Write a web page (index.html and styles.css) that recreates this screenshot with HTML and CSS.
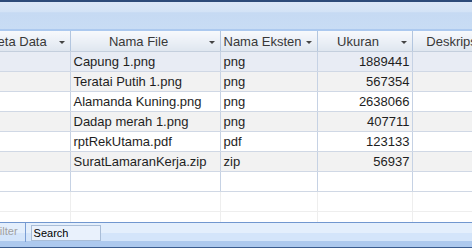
FILE: index.html
```html
<!DOCTYPE html>
<html lang="id">
<head>
    <meta charset="UTF-8">
    <title>Meta Data File</title>
    <link rel="stylesheet" href="styles.css">
</head>
<body>
    <div class="window">
        <div class="tab-strip"></div>

        <div class="grid-view">
            <table class="grid">
                <colgroup>
                    <col class="c-meta">
                    <col class="c-file">
                    <col class="c-ext">
                    <col class="c-size">
                    <col class="c-desc">
                </colgroup>
                <thead>
                    <tr>
                        <th><div class="head"><span class="label">Jenis Meta Data</span><span class="arrow"></span></div></th>
                        <th><div class="head"><span class="label">Nama File</span><span class="arrow"></span></div></th>
                        <th><div class="head"><span class="label">Nama Ekstensi</span><span class="arrow"></span></div></th>
                        <th><div class="head"><span class="label">Ukuran</span><span class="arrow"></span></div></th>
                        <th><div class="head"><span class="label">Deskripsi</span><span class="arrow"></span></div></th>
                    </tr>
                </thead>
                <tbody>
                    <tr class="current">
                        <td></td><td>Capung 1.png</td><td>png</td><td class="num">1889441</td><td></td>
                    </tr>
                    <tr class="alt">
                        <td></td><td>Teratai Putih 1.png</td><td>png</td><td class="num">567354</td><td></td>
                    </tr>
                    <tr>
                        <td></td><td>Alamanda Kuning.png</td><td>png</td><td class="num">2638066</td><td></td>
                    </tr>
                    <tr class="alt">
                        <td></td><td>Dadap merah 1.png</td><td>png</td><td class="num">407711</td><td></td>
                    </tr>
                    <tr>
                        <td></td><td>rptRekUtama.pdf</td><td>pdf</td><td class="num">123133</td><td></td>
                    </tr>
                    <tr class="alt">
                        <td></td><td>SuratLamaranKerja.zip</td><td>zip</td><td class="num">56937</td><td></td>
                    </tr>
                    <tr>
                        <td></td><td></td><td></td><td></td><td></td>
                    </tr>
                    <tr class="blank">
                        <td></td><td></td><td></td><td></td><td></td>
                    </tr>
                    <tr class="blank">
                        <td></td><td></td><td></td><td></td><td></td>
                    </tr>
                </tbody>
            </table>
        </div>

        <div class="nav-bar">
            <span class="filter">No Filter</span>
            <span class="search">Search</span>
        </div>
    </div>
</body>
</html>
```

FILE: styles.css
```css
html, body {
    margin: 0;
    padding: 0;
}
body {
    font-family: "Liberation Sans", Arial, sans-serif;
    background-color: #fff;
    width: 472px;
    height: 248px;
    overflow: hidden;
}
.window {
    display: flex;
    flex-direction: column;
    height: 248px;
}
.tab-strip {
    height: 27px;
    border-top: 2px solid #2d4b79;
    border-bottom: 2px solid #acc9ef;
    background: linear-gradient(#dbe7f7 0%, #d4e3f6 35%, #c6daf3 40%, #c8dcf4 100%);
}
.grid-view {
    height: 191px;
    overflow: hidden;
}
.grid {
    border-collapse: collapse;
    table-layout: fixed;
    width: 564px;
    margin-left: -57px;
    font-size: 13px;
    color: #1e1e1e;
}
.c-meta { width: 127px; }
.c-file { width: 150px; }
.c-ext  { width: 97px; }
.c-size { width: 95px; }
.c-desc { width: 95px; }

.grid th {
    height: 20px;
    padding: 0;
    font-weight: normal;
    color: #383838;
    background: linear-gradient(#f7f9fc, #e9eef5 60%, #dfe6ef);
    border-right: 1px solid #b3c6df;
    border-bottom: 1px solid #c4cfdd;
}
.head {
    display: flex;
    align-items: center;
}
.label {
    flex: 1;
    text-align: center;
    white-space: nowrap;
    overflow: hidden;
    padding-left: 3px;
}
.arrow {
    width: 16px;
    height: 20px;
    flex: none;
    display: flex;
    align-items: center;
    justify-content: center;
}
.arrow::after {
    content: "";
    border-left: 3px solid transparent;
    border-right: 3px solid transparent;
    border-top: 3px solid #444;
    margin-top: 2px;
}
.grid td {
    height: 19px;
    padding: 0 3px;
    white-space: nowrap;
    overflow: hidden;
    border-right: 1px solid #c6d2e4;
    border-bottom: 1px solid #d0d8e5;
}
.grid td.num {
    text-align: right;
    padding-right: 2px;
}
.grid tr.current td {
    background-color: #e8ecf4;
}
.grid tr.alt td {
    background-color: #f2f2f2;
}
.grid tr.blank td {
    border-right-color: #eeeeee;
    border-bottom-color: #eeeeee;
}
.nav-bar {
    flex: 1;
    display: flex;
    align-items: flex-start;
    border-top: 1px solid #7197cf;
    border-bottom: 1px solid #3b5c8e;
    background: linear-gradient(#e4effc 0%, #e4effc 40%, #d4e5fa 41%, #d4e5fa 75%, #adc9ee 76%, #adc9ee 100%);
    font-size: 11px;
}
.filter {
    margin-left: -24px;
    padding: 2px 7px 4px 0;
    color: #a0a0a0;
    border-right: 1px solid #7a9ed4;
    line-height: 13px;
    height: 13px;
}
.search {
    margin: 2px 0 0 5px;
    width: 66px;
    height: 14px;
    padding-left: 2px;
    line-height: 14px;
    color: #000;
    background-color: #e9f1fc;
    border: 1px solid #a9bdd7;
}
```
